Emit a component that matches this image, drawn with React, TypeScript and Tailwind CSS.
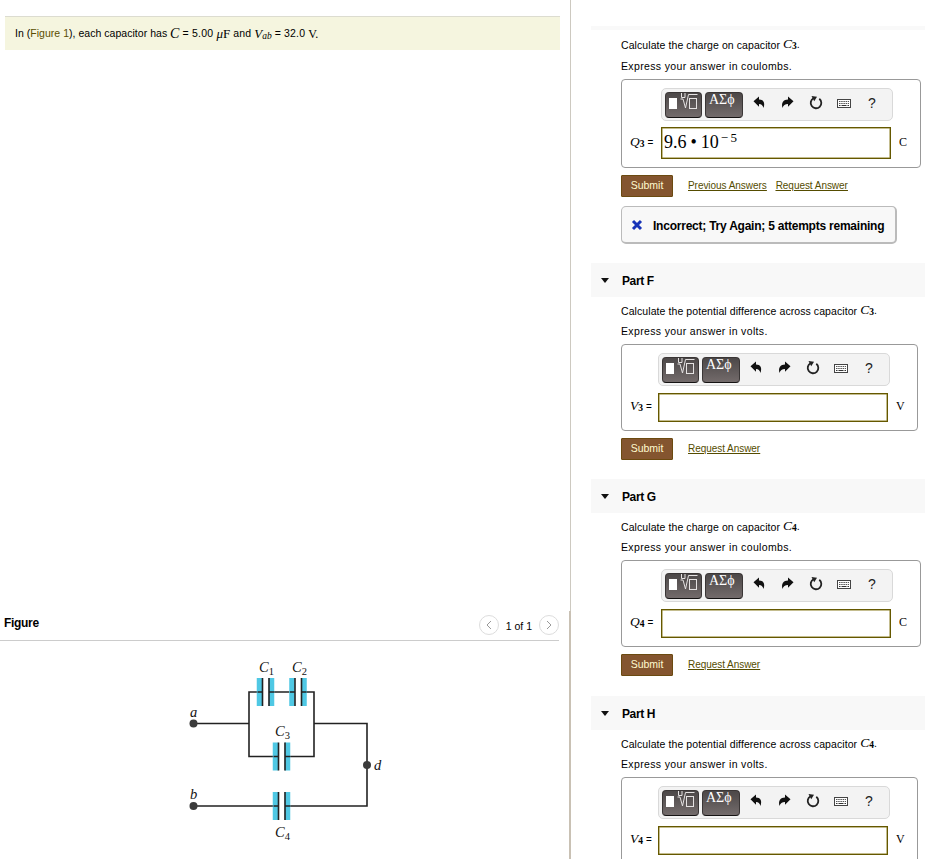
import React from 'react'
import { clsx } from 'clsx'

const parts = [
  {
    name: '',
    task: 'Calculate the charge on capacitor',
    symbol: 'C',
    sub: '3',
    units: 'coulombs',
    label: 'Q',
    unit: 'C',
    value: true,
    wide: true,
    actions: true,
    height: 'h-[237px]',
  },
  {
    name: 'Part F',
    task: 'Calculate the potential difference across capacitor',
    symbol: 'C',
    sub: '3',
    units: 'volts',
    label: 'V',
    unit: 'V',
    value: false,
    wide: false,
    actions: true,
    height: 'h-[216px]',
  },
  {
    name: 'Part G',
    task: 'Calculate the charge on capacitor',
    symbol: 'C',
    sub: '4',
    units: 'coulombs',
    label: 'Q',
    unit: 'C',
    value: false,
    wide: true,
    actions: true,
    height: 'h-[217px]',
  },
  {
    name: 'Part H',
    task: 'Calculate the potential difference across capacitor',
    symbol: 'C',
    sub: '4',
    units: 'volts',
    label: 'V',
    unit: 'V',
    value: false,
    wide: false,
    actions: false,
    height: 'h-[217px]',
  },
]

const Sym = ({ name, sub }: { name: string; sub: string }) => (
  <span className="font-['Liberation_Serif',serif] tracking-normal whitespace-nowrap">
    <i className="text-[13.500px] leading-none">{name}</i>
    <span className="relative top-[1px] text-[9.500px] leading-none font-bold">{sub}</span>
  </span>
)

const Toolbar = () => (
  <div className="flex h-[33px] w-[232px] items-center rounded-[5px] border border-[#d9d9d9] bg-[#f3f3f3] pl-[3px]">
    <div className="mr-[3px] h-[26px] w-[37px] rounded-[4px] border border-[#3a3636] border-b-[#151313] bg-linear-to-b from-[#4c4848] to-[#736b6b]">
      <svg width="35" height="24" viewBox="0 0 35 24" fill="none">
        <rect x="3" y="5" width="8" height="11" fill="#fff" />
        <path d="M14.500 6h2.500l2.500 9L22.500 1.500h9M15.500 0v4.500M19 0v4.500h-3.500" stroke="#e5e2e2" />
        <rect x="23.500" y="5.500" width="7" height="10" stroke="#e5e2e2" />
      </svg>
    </div>
    <div className="h-[26px] w-[38px] rounded-[4px] border border-[#3a3636] border-b-[#151313] bg-linear-to-b from-[#4c4848] to-[#736b6b] pl-[3px] font-['Liberation_Serif',serif] text-[14px] leading-[14px] text-white">
      ΑΣϕ
    </div>
    <svg className="ml-[10px]" width="130" height="20" viewBox="0 0 130 20" fill="none">
      <path d="M0.500 6.300L6 1.500v3c4.500 0 6.300 3 4.500 8.500-.8-2.800-2-4-4.500-4v2.700z" fill="#111" />
      <path d="M40.500 6.300L35 1.500v3c-4.500 0-7 3-5.500 8.500.8-2.800 2.500-4 5.500-4v2.700z" fill="#111" />
      <path d="M66.300 3.800A5.300 5.300 0 1 1 60.500 3.300" stroke="#222" strokeWidth="1.800" />
      <path d="M58.500 1l5.500.8-2.800 4.400z" fill="#222" />
      <rect x="84.500" y="4.500" width="13" height="8" stroke="#444" fill="#fff" />
      <path d="M86 6.500h10M86 8.500h10" stroke="#555" strokeDasharray="1.500 .7" />
      <path d="M86 10.500h1.500M88.500 10.500h5M94.500 10.500h1.500" stroke="#333" />
      <text x="115" y="12.500" fontFamily="Liberation Sans, sans-serif" fontSize="14" fill="#222">?</text>
    </svg>
  </div>
)

const Part = ({ part }: { part: (typeof parts)[0] }) => {
  const { value, wide, actions } = part
  return (
    <section className={clsx('ml-5 shrink-0', part.height)}>
      {part.name ? (
        <div className="flex h-[34px] items-center bg-[#f8f8f8] pl-[10px]">
          <svg width="8" height="5" viewBox="0 0 8 5">
            <path d="M0 0h8L4 5z" fill="#111" />
          </svg>
          <h2 className="mt-px ml-[13px] text-[12px] font-bold tracking-[-0.400px]">{part.name}</h2>
        </div>
      ) : (
        <div className="h-1 bg-[#f9f9f9]"></div>
      )}
      <div className="pl-[30px] text-[11px]">
        <p className={clsx('flex h-5 items-center gap-[3px] text-[10.500px] tracking-[0.080px] whitespace-nowrap', part.name ? 'mt-[5px]' : 'mt-[6px]')}>
          <span>{part.task}</span>
          <span className="-mt-[2px]"><Sym name={part.symbol} sub={part.sub} />.</span>
        </p>
        <p className={clsx('flex items-center text-[10.500px] tracking-[0.350px]', value ? 'h-[22px]' : 'h-[20px]')}>Express your answer in {part.units}.</p>
        <div className={clsx('rounded-[4px] border border-[#999] pt-2', value ? 'mt-[1px] h-[89px]' : 'mt-[2px] h-[87px]', wide ? 'w-[300px] pl-[39px]' : 'w-[297px] pl-[36px]')}>
          <Toolbar />
          <div className={clsx('flex items-center', value ? 'mt-[6px]' : 'mt-[7px]', wide ? '-ml-[39px]' : '-ml-[36px]')}>
            <span className={clsx('mb-[2px] shrink-0 pl-2', wide ? 'w-[39px]' : 'w-[36px]')}>
              <Sym name={part.label} sub={part.sub} /> <span className="text-[10px]">=</span>
            </span>
            <div className={clsx('w-[230px] shrink-0 border border-[#655800] bg-white pl-[2px] font-["Liberation_Serif",serif] text-[18px] shadow-[inset_0_0_0_0.5px_#8a7d20]', value ? 'h-[32px] leading-[28px]' : 'h-[29px]')}>
              {value && <>9.6<span className="mx-[4px]">•</span>10<span className="relative -top-[6px] ml-[2px] text-[13px] tracking-[-0.500px]">− 5</span></>}
            </div>
            <span className="mb-[3px] ml-2 font-['Liberation_Serif',serif] text-[12px]">{part.unit}</span>
          </div>
        </div>
        {actions && (
          <div className="mt-[7px] flex items-center">
            <button className="h-[22px] w-[52px] rounded-[1px] border border-[#6b4a10] bg-[#84552f] text-[10.500px] text-[#fffbd0]">Submit</button>
            <div className="mb-[2px] ml-[15px] flex gap-[9px] text-[10px] tracking-[-0.050px] text-[#554c00] underline">
              {value && <a>Previous Answers</a>}
              <a>Request Answer</a>
            </div>
          </div>
        )}
        {value && (
          <div className="mt-[9px] flex h-[38px] w-[276px] items-center rounded-[5px] border border-r-2 border-b-2 border-[#bbb] bg-[#f8f8f8] pl-[9px]">
            <svg width="12" height="12" viewBox="0 0 12 12">
              <path d="M2 2l8 8M10 2l-8 8" stroke="#1733b8" strokeWidth="3" />
            </svg>
            <b className="mt-[3px] ml-[10px] text-[12px] tracking-[-0.230px] whitespace-nowrap">Incorrect; Try Again; 5 attempts remaining</b>
          </div>
        )}
      </div>
    </section>
  )
}

const Capacitor = ({ x, y }: { x: number; y: number }) => (
  <g transform={`translate(${x} ${y})`}>
    <path d="M-6.500 -14v28M5.500 -14v28" stroke="#4fc8e4" strokeWidth="5.500" />
    <path d="M-3.500 -14v28M3 -14v28" stroke="#222" strokeWidth="1.600" />
    <path d="M-3.500 0h-5M3 0h5" stroke="#222" strokeWidth="1.600" />
  </g>
)

const labels = [
  { name: 'C', sub: '1', x: 259, y: 31 },
  { name: 'C', sub: '2', x: 292, y: 31 },
  { name: 'C', sub: '3', x: 275, y: 95 },
  { name: 'C', sub: '4', x: 275, y: 196 },
  { name: 'a', sub: '', x: 190, y: 76 },
  { name: 'b', sub: '', x: 190, y: 158 },
  { name: 'd', sub: '', x: 374, y: 129 },
]

const Circuit = () => (
  <svg width="560" height="218" viewBox="0 0 560 218" fill="none">
    <path d="M193 82.500h56M261 51h-12v64.500h28M269 51h25M302 51h12v64.500h-28M314 82.500h53v82.500h-81M193 165h84" stroke="#222" strokeWidth="1.600" />
    <Capacitor x={266} y={51} />
    <Capacitor x={298.5} y={51} />
    <Capacitor x={282} y={115.5} />
    <Capacitor x={282} y={165} />
    <circle cx="193.500" cy="82.500" r="4" fill="#3b3b3b" />
    <circle cx="193.500" cy="165" r="4" fill="#3b3b3b" />
    <circle cx="367" cy="124" r="4" fill="#3b3b3b" />
    {labels.map((l, index) => (
      <text key={index} x={l.x} y={l.y} fill="#111" fontFamily="Liberation Serif, serif" fontSize="14.500">
        <tspan fontStyle="italic">{l.name}</tspan>
        {l.sub && <tspan fontSize="10.500" dy="3">{l.sub}</tspan>}
      </text>
    ))}
  </svg>
)

const App = () => {
  return (
    <div className="flex h-[859px] w-[925px] overflow-hidden bg-white font-['Liberation_Sans',sans-serif] text-black">
      <div className="flex w-[569px] shrink-0 flex-col">
        <div className="mt-4 ml-[5px] flex h-[34px] w-[555px] items-center border-t border-[#dcdcd0] bg-[#f5f5df] pl-[10px] text-[10.500px] whitespace-pre">
          <span className="tracking-[0.030px]">In (<a className="text-[#5a4d00]">Figure 1</a>), each capacitor has </span>
          <i className="font-['Liberation_Serif',serif] text-[14px] leading-none">C</i>
          <span className="tracking-[0.200px]"> = 5.00 </span>
          <span className="font-['Liberation_Serif',serif] text-[13px]"><i>μ</i>F</span>
          <span className="tracking-[0.150px]"> and </span>
          <i className="font-['Liberation_Serif',serif] text-[13px]">V<span className="relative top-[1px] text-[9.500px]">ab</span></i>
          <span className="tracking-[0.150px]"> = 32.0 </span>
          <span className="font-['Liberation_Serif',serif] text-[12px]">V.</span>
        </div>
        <div className="mt-auto flex h-[31px] w-[559px] items-center border-b border-[#ccc] pl-1">
          <h2 className="mb-[5px] text-[12px] font-bold tracking-[-0.300px]">Figure</h2>
          <div className="ml-auto flex items-center text-[10.500px]">
            <span className="flex size-5 items-center justify-center rounded-full border border-[#ddd]">
              <svg width="6" height="10" viewBox="0 0 6 10" fill="none"><path d="M5 1L1 5l4 4" stroke="#999" /></svg>
            </span>
            <span className="mx-[7px] mt-[3px]">1 of 1</span>
            <span className="flex size-5 items-center justify-center rounded-full border border-[#ddd]">
              <svg width="6" height="10" viewBox="0 0 6 10" fill="none"><path d="M1 1l4 4-4 4" stroke="#999" /></svg>
            </span>
          </div>
        </div>
        <Circuit />
      </div>
      <div className="flex w-[2px] shrink-0 flex-col">
        <div className="ml-px h-[611px] bg-[#cdc9c0]"></div>
        <div className="flex-1 bg-[#c9c1b4]"></div>
      </div>
      <div className="flex min-w-0 flex-1 flex-col pt-[26px]">
        {parts.map((part, index) => (
          <Part key={index} part={part} />
        ))}
      </div>
    </div>
  )
}

export default App
